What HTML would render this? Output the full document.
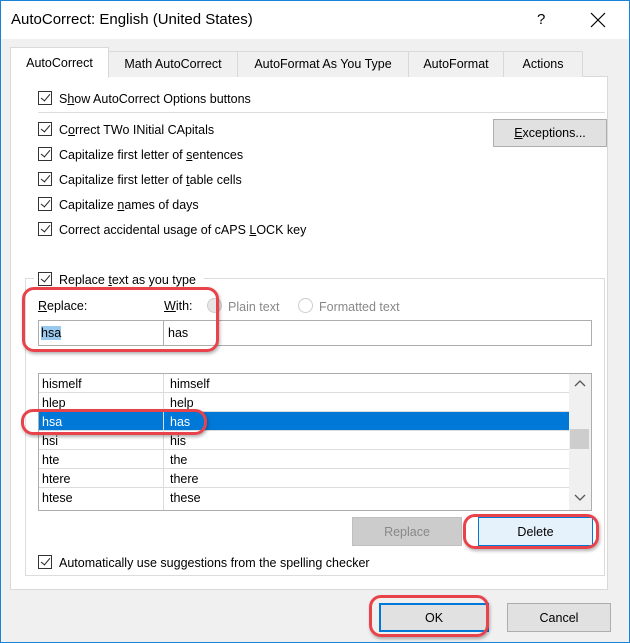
<!DOCTYPE html>
<html><head><style>
*{margin:0;padding:0;box-sizing:border-box}
body{width:630px;height:643px;background:#f0f0f0;font-family:"Liberation Sans",sans-serif;font-size:12.5px;color:#000;position:relative;overflow:hidden}
.a{position:absolute}
.frame{left:0;top:0;width:630px;height:643px;border:1px solid #1883d7}
.title{left:1px;top:1px;width:628px;height:38px;background:#fff}
.cb{position:absolute;width:14px;height:14px;border:1px solid #333;background:#fff}
.cb:after{content:"";position:absolute;left:4px;top:0px;width:4px;height:8px;border:solid #222;border-width:0 1.5px 1.5px 0;transform:rotate(40deg)}
.lbl{position:absolute;white-space:nowrap}
.tab{position:absolute;background:#f0f0f0;border:1px solid #d9d9d9;border-bottom:none;text-align:center;line-height:25px}
.btn{position:absolute;background:#e1e1e1;border:1px solid #adadad;text-align:center}
.row{position:absolute;left:39px;width:530px;height:19px;border-bottom:1px solid #dcdcdc;line-height:20px}
.row span{position:absolute}
.red{position:absolute;border:3px solid #e8434b;border-radius:12px;box-shadow:1px 2px 3px rgba(0,0,0,.3)}
.t{top:1px}
</style></head><body>
<div class="a frame"></div>
<div class="a title"></div>
<div class="lbl" style="left:11px;top:11px;font-size:15px">AutoCorrect: English (United States)</div>
<div class="lbl" style="left:537px;top:11px;font-size:15px">?</div>
<svg class="a" style="left:590px;top:12px" width="16" height="16"><path d="M1 1L15 15M15 1L1 15" stroke="#000" stroke-width="1.2"/></svg>
<div class="a" style="left:10px;top:76px;width:598px;height:514px;background:#fff;border:1px solid #d9d9d9"></div>
<div class="tab" style="left:108px;top:51px;width:130px;height:26px">Math AutoCorrect</div>
<div class="tab" style="left:237px;top:51px;width:172px;height:26px">AutoFormat As You Type</div>
<div class="tab" style="left:408px;top:51px;width:96px;height:26px">AutoFormat</div>
<div class="tab" style="left:503px;top:51px;width:80px;height:26px">Actions</div>
<div class="tab" style="left:10px;top:47px;width:99px;height:31px;background:#fff;line-height:31px">AutoCorrect</div>
<div class="cb" style="left:38px;top:91px"></div><div class="lbl" style="left:59px;top:92px">S<u>h</u>ow AutoCorrect Options buttons</div>
<div class="a" style="left:38px;top:112px;width:567px;height:1px;background:#dcdcdc"></div>
<div class="cb" style="left:38px;top:122px"></div><div class="lbl" style="left:59px;top:123px">C<u>o</u>rrect TWo INitial CApitals</div>
<div class="cb" style="left:38px;top:147px"></div><div class="lbl" style="left:59px;top:148px">Capitalize first letter of <u>s</u>entences</div>
<div class="cb" style="left:38px;top:172px"></div><div class="lbl" style="left:59px;top:173px">Capitalize first letter of <u>t</u>able cells</div>
<div class="cb" style="left:38px;top:197px"></div><div class="lbl" style="left:59px;top:198px">Capitalize <u>n</u>ames of days</div>
<div class="cb" style="left:38px;top:222px"></div><div class="lbl" style="left:59px;top:223px">Correct accidental usage of cAPS <u>L</u>OCK key</div>
<div class="btn" style="left:493px;top:119px;width:114px;height:28px;line-height:27px"><u>E</u>xceptions...</div>
<div class="a" style="left:25px;top:278px;width:580px;height:298px;border:1px solid #dcdcdc"></div>
<div class="a" style="left:34px;top:270px;width:170px;height:16px;background:#fff"></div>
<div class="cb" style="left:38px;top:272px"></div><div class="lbl" style="left:59px;top:273px">Replace <u>t</u>ext as you type</div>
<div class="lbl" style="left:38px;top:299px"><u>R</u>eplace:</div>
<div class="lbl" style="left:164px;top:299px"><u>W</u>ith:</div>
<div class="a" style="left:207px;top:298px;width:15px;height:15px;border-radius:50%;border:1px solid #ccc;background:#e6e6e6"></div>
<div class="lbl" style="left:228px;top:300px;color:#888">Plain text</div>
<div class="a" style="left:298px;top:298px;width:15px;height:15px;border-radius:50%;border:1px solid #ccc;background:#fff"></div>
<div class="lbl" style="left:319px;top:300px;color:#888">Formatted text</div>
<div class="a" style="left:38px;top:320px;width:554px;height:26px;border:1px solid #adadad;background:#fff"></div>
<div class="a" style="left:163px;top:321px;width:1px;height:24px;background:#adadad"></div>
<div class="lbl" style="left:41px;top:326px;background:#99c9ef">hsa</div>
<div class="lbl" style="left:168px;top:326px">has</div>
<div class="a" style="left:38px;top:373px;width:554px;height:138px;border:1px solid #adadad;background:#fff"></div>
<div class="row" style="top:374px"><span style="left:3px">hismelf</span><span style="left:131px">himself</span></div>
<div class="row" style="top:393px"><span style="left:3px">hlep</span><span style="left:131px">help</span></div>
<div class="row" style="top:412px;background:#0078d7;color:#fff"><span style="left:3px">hsa</span><span style="left:131px">has</span></div>
<div class="row" style="top:431px"><span style="left:3px">hsi</span><span style="left:131px">his</span></div>
<div class="row" style="top:450px"><span style="left:3px">hte</span><span style="left:131px">the</span></div>
<div class="row" style="top:469px"><span style="left:3px">htere</span><span style="left:131px">there</span></div>
<div class="row" style="top:488px;border:none"><span style="left:3px">htese</span><span style="left:131px">these</span></div>
<div class="a" style="left:163px;top:374px;width:1px;height:136px;background:#dcdcdc"></div>
<div class="a" style="left:569px;top:374px;width:22px;height:136px;background:#f0f0f0"></div>
<div class="a" style="left:570px;top:429px;width:19px;height:20px;background:#cdcdcd"></div>
<svg class="a" style="left:574px;top:380px" width="12" height="8"><path d="M1 6L6 1L11 6" stroke="#555" stroke-width="1.3" fill="none"/></svg>
<svg class="a" style="left:574px;top:494px" width="12" height="8"><path d="M1 1L6 6L11 1" stroke="#555" stroke-width="1.3" fill="none"/></svg>
<div class="btn" style="left:352px;top:517px;width:110px;height:29px;line-height:28px;color:#888;background:#ccc;border-color:#bfbfbf">Replace</div>
<div class="btn" style="left:478px;top:517px;width:115px;height:29px;line-height:28px;background:#e5f1fb;border-color:#0078d7">Delete</div>
<div class="cb" style="left:38px;top:555px"></div><div class="lbl" style="left:59px;top:556px">Automatically use suggestions from the spelling checker</div>
<div class="btn" style="left:379px;top:603px;width:110px;height:29px;line-height:27px;border:2px solid #0078d7">OK</div>
<div class="btn" style="left:507px;top:603px;width:104px;height:29px;line-height:28px">Cancel</div>
<div class="red" style="left:22px;top:287px;width:197px;height:65px"></div>
<div class="red" style="left:21px;top:409px;width:186px;height:26px"></div>
<div class="red" style="left:463px;top:514px;width:136px;height:35px"></div>
<div class="red" style="left:369px;top:595px;width:120px;height:42px"></div>
</body></html>
